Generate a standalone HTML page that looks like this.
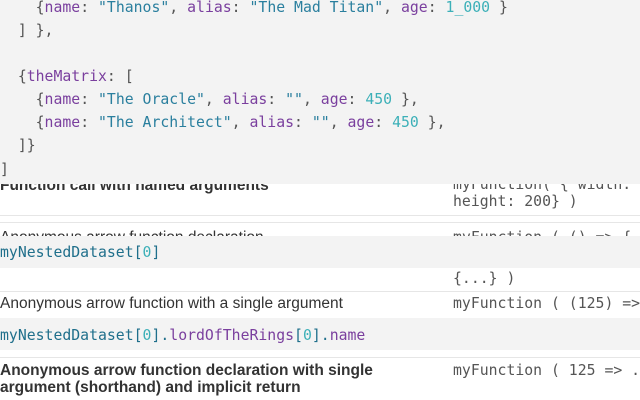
<!DOCTYPE html>
<html><head><meta charset="utf-8"><style>
html,body{margin:0;padding:0;width:640px;height:400px;overflow:hidden;background:#fff;position:relative}
.m{font-family:"DejaVu Sans Mono","Liberation Mono",monospace;font-size:14.8px;white-space:pre;position:absolute;line-height:20px}
.s{font-family:"Liberation Sans","DejaVu Sans",sans-serif;font-size:15.5px;position:absolute;line-height:17px;color:#333;white-space:nowrap}
.b{font-weight:bold;font-size:15.5px;letter-spacing:0}
.k{color:#7a3f9e}.st{color:#2a7f9e}.n{color:#3cb0b8}.p{color:#555}.f{color:#1f6f8b}
.bar{position:absolute;left:0;width:640px;background:#f3f3f3}
.hr{position:absolute;left:0;width:640px;height:1px;background:#e6e6e6}
.r{color:#555}
</style></head><body>
<div class="bar" style="top:0;height:184px"></div>
<div class="m p" style="left:0;top:-2px">    {<span class="k">name</span>: <span class="st">"Thanos"</span>, <span class="k">alias</span>: <span class="st">"The Mad Titan"</span>, <span class="k">age</span>: <span class="n">1_000</span> }</div>
<div class="m p" style="left:0;top:21px">  ] },</div>
<div class="m p" style="left:0;top:67px">  {<span class="k">theMatrix</span>: [</div>
<div class="m p" style="left:0;top:90px">    {<span class="k">name</span>: <span class="st">"The Oracle"</span>, <span class="k">alias</span>: <span class="st">""</span>, <span class="k">age</span>: <span class="n">450</span> },</div>
<div class="m p" style="left:0;top:113px">    {<span class="k">name</span>: <span class="st">"The Architect"</span>, <span class="k">alias</span>: <span class="st">""</span>, <span class="k">age</span>: <span class="n">450</span> },</div>
<div class="m p" style="left:0;top:136px">  ]}</div>
<div class="m p" style="left:0;top:160px">]</div>

<div style="position:absolute;left:0;top:184px;width:640px;height:216px;overflow:hidden">
<div class="s b" style="left:0;top:-7px">Function call with named arguments</div>
<div class="m r" style="left:453px;top:-8px;line-height:17px">myFunction( { width:
height: 200} )</div>
</div>
<div class="hr" style="top:215px"></div>
<div class="hr" style="top:222px"></div>
<div class="s" style="left:0;top:229px">Anonymous arrow function declaration</div>
<div class="m r" style="left:453px;top:228px">myFunction ( () => {</div>
<div class="bar" style="top:236px;height:32px"></div>
<div class="m f" style="left:0;top:243px">myNestedDataset[<span class="n">0</span>]</div>
<div class="m r" style="left:453px;top:269px">{...} )</div>
<div class="hr" style="top:291px"></div>
<div class="s" style="left:0;top:295px">Anonymous arrow function with a single argument</div>
<div class="m r" style="left:453px;top:294px">myFunction ( (125) =></div>
<div class="bar" style="top:318px;height:32px"></div>
<div class="m f" style="left:0;top:326px">myNestedDataset[<span class="n">0</span>].<span class="k">lordOfTheRings</span>[<span class="n">0</span>].<span class="k">name</span></div>
<div class="hr" style="top:357px"></div>
<div class="s b" style="left:0;top:362px">Anonymous arrow function declaration with single</div>
<div class="s b" style="left:0;top:379px">argument (shorthand) and implicit return</div>
<div class="m r" style="left:453px;top:361px">myFunction ( 125 => .</div>
</body></html>
